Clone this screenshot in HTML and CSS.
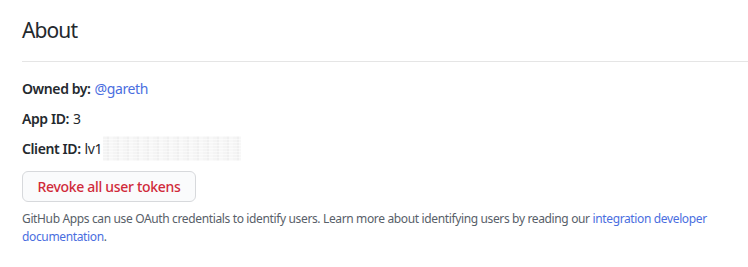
FILE: index.html
```html
<!DOCTYPE html>
<html>
<head>
<meta charset="utf-8">
<link rel="stylesheet" href="styles.css">
</head>
<body>
<div class="page">
  <h2 class="title">About</h2>
  <div class="info">
    <p class="row"><strong>Owned by:</strong> <a href="#">@gareth</a></p>
    <p class="row"><strong>App ID:</strong> 3</p>
    <p class="row"><strong>Client ID:</strong> lv1<span class="redacted"></span></p>
  </div>
  <button class="btn-danger">Revoke all user tokens</button>
  <p class="note">GitHub Apps can use OAuth credentials to identify users. Learn more about identifying users by reading our <a href="#">integration developer documentation</a>.</p>
</div>
</body>
</html>
```
FILE: styles.css
```css
html, body {
  margin: 0;
  padding: 0;
  background: #ffffff;
}
body {
  font-family: "Noto Sans", "Open Sans", sans-serif;
  color: #24292e;
}
.page {
  padding: 14px 0 0 22px;
}
.title {
  margin: 0;
  font-size: 21px;
  letter-spacing: -0.9px;
  font-weight: 400;
  line-height: 32px;
  padding-bottom: 15px;
  border-bottom: 1px solid #e5e5e5;
}
.info {
  padding-top: 17px;
}
.row {
  margin: 0;
  font-size: 14px;
  letter-spacing: -0.4px;
  line-height: 20px;
  height: 30px;
  display: flex;
  align-items: flex-start;
  gap: 4px;
}
.row strong {
  font-weight: 600;
}
a {
  color: #4a6ee0;
  text-decoration: none;
}
.redacted {
  display: inline-block;
  width: 138px;
  height: 25px;
  margin-top: -3px;
  margin-left: -3px;
  background:
    repeating-linear-gradient(0deg, rgba(255,255,255,0.5) 0 1px, rgba(0,0,0,0) 1px 3px),
    repeating-linear-gradient(90deg, #f4f4f4 0 4px, #efefef 4px 6px, #f7f7f7 6px 10px);
}
.btn-danger {
  margin-top: 2px;
  display: block;
  width: 174px;
  height: 31px;
  border: 1px solid #d7d9dc;
  border-radius: 6px;
  background: #fafbfc;
  color: #d02a3a;
  font-family: inherit;
  font-size: 14px;
  letter-spacing: -0.3px;
  font-weight: 500;
  padding: 0;
}
.note {
  margin: 8px 0 0;
  font-size: 12px;
  letter-spacing: -0.36px;
  line-height: 18px;
  color: #586069;
  padding-right: 30px;
}
```
